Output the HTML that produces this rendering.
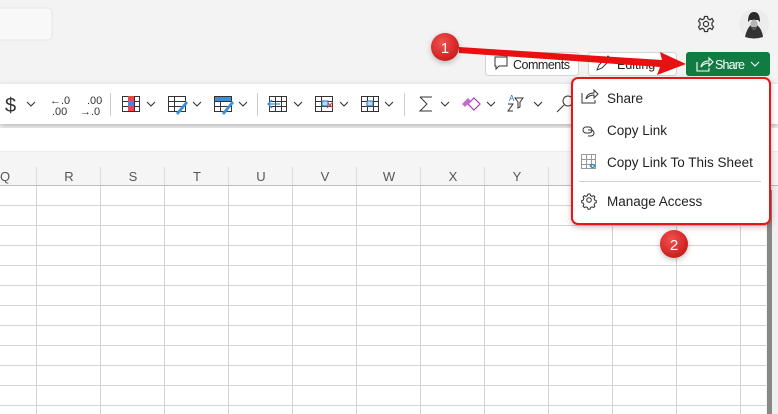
<!DOCTYPE html>
<html><head><meta charset="utf-8"><style>
html,body{margin:0;padding:0;width:778px;height:414px;overflow:hidden;background:#f3f3f3;font-family:"Liberation Sans",sans-serif}
svg{position:absolute;left:0;top:0}
</style></head><body>
<svg width="778" height="414" viewBox="0 0 778 414" xmlns="http://www.w3.org/2000/svg" font-family="Liberation Sans, sans-serif">
<defs>
<filter id="sh" x="-20%" y="-20%" width="140%" height="140%"><feDropShadow dx="0" dy="2" stdDeviation="3" flood-color="#000" flood-opacity="0.25"/></filter>
<radialGradient id="rg" cx="0.4" cy="0.35" r="0.7"><stop offset="0" stop-color="#f25050"/><stop offset="1" stop-color="#c81a1a"/></radialGradient>
</defs>
<rect width="778" height="414" fill="#f3f3f3"/>
<rect x="-10" y="8" width="62" height="32" rx="4" fill="#f8f8f8" stroke="#e6e6e6"/>
<g transform="translate(706,24)" fill="none" stroke="#333" stroke-width="1.2">
<circle r="2.6"/>
<path d="M-1.5,-7.5 L1.5,-7.5 L2,-5.2 L4,-4.2 L6,-5.5 L7.5,-3 L6,-1.3 L6,1.3 L7.5,3 L6,5.5 L4,4.2 L2,5.2 L1.5,7.5 L-1.5,7.5 L-2,5.2 L-4,4.2 L-6,5.5 L-7.5,3 L-6,1.3 L-6,-1.3 L-7.5,-3 L-6,-5.5 L-4,-4.2 L-2,-5.2 Z"/>
</g>
<circle cx="754" cy="24" r="15" fill="#ececec"/>
<path d="M745,37 Q747,28 751,25 L757,25 Q762,29 763,37 Q754,40 745,37 Z" fill="#333"/>
<path d="M748,22 Q748,12 754,12 Q760,12 760,22 L758,20 L750,20 Z" fill="#2a2a2a"/>
<ellipse cx="754" cy="24" rx="3.5" ry="4.5" fill="#b5b5b5"/>
<path d="M751,27 Q754,34 757,27 Z" fill="#555"/>
<rect x="485.5" y="52.5" width="93" height="23" rx="3" fill="#fff" stroke="#d4d4d4"/>
<path d="M495,57 h12 v9 h-8 l-3,3 v-3 h-1 z" fill="none" stroke="#333" stroke-width="1"/>
<text x="513" y="69" font-size="12.5" fill="#222" textLength="57">Comments</text>
<rect x="588.5" y="52.5" width="88" height="23" rx="3" fill="#fff" stroke="#d4d4d4"/>
<path d="M597,70 l2,-5 l9,-9 l3,3 l-9,9 z" fill="none" stroke="#333"/>
<text x="617" y="69" font-size="12.5" fill="#222">Editing</text>
<rect x="686" y="52" width="84" height="24" rx="3" fill="#107c41"/>
<path d="M697,62 v9 h12 v-3 M701,67 q1,-6 8,-6 v-3 l4,4 l-4,4 v-3 q-5,0 -8,4" fill="none" stroke="#fff" stroke-width="1.1"/>
<text x="715" y="69" font-size="12.5" fill="#fff" textLength="30">Share</text>
<path d="M751,62 l4,4 l4,-4" fill="none" stroke="#fff" stroke-width="1.1"/>
<rect x="0" y="84" width="778" height="40" fill="#fff" filter="url(#sh)"/>
<rect x="0" y="128" width="778" height="23" fill="#fff"/>
<text x="5" y="112" font-size="20" fill="#333">$</text>
<g fill="none" stroke="#333" stroke-width="1.1">
<path d="M27,102 l4,4 l4,-4 M147,102 l4,4 l4,-4 M193,102 l4,4 l4,-4 M239,102 l4,4 l4,-4 M294,102 l4,4 l4,-4 M340,102 l4,4 l4,-4 M385,102 l4,4 l4,-4 M441,102 l4,4 l4,-4 M487,102 l4,4 l4,-4 M534,102 l4,4 l4,-4"/>
</g>
<text x="50" y="104" font-size="11" fill="#333">←.0</text><text x="52" y="115" font-size="11" fill="#333">.00</text>
<text x="87" y="104" font-size="11" fill="#333">.00</text><text x="80" y="115" font-size="11" fill="#333">→.0</text>
<line x1="110.5" y1="93" x2="110.5" y2="116" stroke="#ccc"/>
<line x1="257.5" y1="93" x2="257.5" y2="116" stroke="#ccc"/>
<line x1="404.5" y1="93" x2="404.5" y2="116" stroke="#ccc"/>
<g fill="none" stroke="#333" stroke-width="1">
<rect x="122.5" y="96.5" width="17" height="15"/><path d="M122,101.5h18M122,106.5h18M128.5,96v16M134.5,96v16"/>
<rect x="168.5" y="96.5" width="17" height="15"/><path d="M168,101.5h18M168,106.5h18M174.5,96v16"/>
<rect x="214.5" y="96.5" width="17" height="15"/><path d="M214,101.5h18M214,106.5h18M220.5,96v16"/>
<rect x="269.5" y="96.5" width="17" height="15"/><path d="M269,101.5h18M269,106.5h18M275.5,96v16M281.5,96v16"/>
<rect x="315.5" y="96.5" width="17" height="15"/><path d="M315,101.5h18M315,106.5h18M321.5,96v16"/>
<rect x="361.5" y="96.5" width="17" height="15"/><path d="M361,101.5h18M361,106.5h18M367.5,96v16M373.5,96v16"/>
<path d="M420,97 h12 M420,97 l7,7 l-7,7 h12"/>
<path d="M515,98 h8 l-3,4 v5 l-2,1 v-6 z"/>
<path d="M508,104 h5 l-5,7 h5"/>
<circle cx="568" cy="101" r="5"/><path d="M564,105 l-7,7"/>
</g>
<rect x="128" y="96" width="6" height="5" fill="#e04a4a"/><rect x="128" y="106" width="6" height="5" fill="#e04a4a"/><rect x="128" y="101" width="6" height="5" fill="#3a8fd6"/>
<path d="M176,113 l10,-12 l2,2 l-10,12z" fill="#3a8fd6"/><path d="M222,113 l10,-12 l2,2 l-10,12z" fill="#3a8fd6"/>
<rect x="215" y="97" width="16" height="4" fill="#3a8fd6"/>
<path d="M268,104 h12 M272,100 l-4,4 l4,4" stroke="#3a8fd6" fill="none" stroke-width="1.3"/>
<path d="M327,102 l6,6 M333,102 l-6,6" stroke="#e04a4a" stroke-width="1.2"/>
<rect x="322" y="101" width="6" height="5" fill="#bcd9f2" stroke="#1f6fb5"/>
<rect x="367" y="101" width="6" height="5" fill="#bcd9f2" stroke="#1f6fb5"/>
<path d="M468,104 l6,-6 l6,6 l-6,6z" fill="#fff" stroke="#a63fb0" stroke-width="1.2"/><path d="M462,104 l6,-6 l3,3 l-6,6z" fill="#c56bd0"/>
<text x="509" y="101" font-size="8" fill="#1f6fb5">A</text>
<rect x="0" y="151" width="778" height="34" fill="#f5f5f5"/>
<line x1="0" y1="151.5" x2="778" y2="151.5" stroke="#ebebeb"/>
<line x1="0" y1="185.5" x2="778" y2="185.5" stroke="#bdbdbd"/>
<g fill="#555" font-size="13" text-anchor="middle">
<text x="5" y="181">Q</text><text x="69" y="181">R</text><text x="133" y="181">S</text><text x="197" y="181">T</text><text x="261" y="181">U</text><text x="325" y="181">V</text><text x="389" y="181">W</text><text x="453" y="181">X</text><text x="517" y="181">Y</text><text x="581" y="181">Z</text>
</g>
<g stroke="#dcdcdc">
<path d="M36.5,167V185M100.5,167V185M164.5,167V185M228.5,167V185M292.5,167V185M356.5,167V185M420.5,167V185M484.5,167V185M548.5,167V185M612.5,167V185M676.5,167V185M740.5,167V185"/>
</g>
<rect x="0" y="186" width="766" height="228" fill="#fff"/>
<g stroke="#d4d4d4">
<path d="M36.5,186V414M100.5,186V414M164.5,186V414M228.5,186V414M292.5,186V414M356.5,186V414M420.5,186V414M484.5,186V414M548.5,186V414M612.5,186V414M676.5,186V414M740.5,186V414"/>
<path d="M0,205.5H766M0,225.5H766M0,245.5H766M0,265.5H766M0,285.5H766M0,305.5H766M0,325.5H766M0,345.5H766M0,365.5H766M0,385.5H766M0,405.5H766"/>
</g>
<rect x="766" y="186" width="12" height="228" fill="#f0f0f0"/>
<rect x="767" y="190" width="5" height="224" fill="#888"/>
<rect x="572" y="78" width="198" height="146" rx="6" fill="#fff" stroke="#e81515" stroke-width="2" filter="url(#sh)"/>
<g fill="none" stroke="#333" stroke-width="1">
<path d="M582,93 v10 h13 v-3 M586,99 q1,-6 8,-6 v-3 l4,4 l-4,4 v-3 q-5,0 -8,4"/>
<path d="M586,127 h3 a3,3 0 0 1 0,6 h-3 a3,3 0 0 1 0,-6 z M588,130 h3 a3,3 0 0 1 0,6 h-3"/>
<rect x="581.5" y="154.5" width="14" height="14" stroke="#999"/><path d="M581,159.5h15M581,164.5h15M586.5,154v15M591.5,154v15" stroke="#999"/>
<circle cx="589" cy="200" r="2.3"/>
<path d="M588,194 h2 l.5,1.6 1.6,.8 1.5,-.8 1.3,1.4 -.8,1.5 .6,1.6 1.6,.5 v2 l-1.6,.5 -.6,1.6 .8,1.5 -1.3,1.4 -1.5,-.8 -1.6,.8 -.5,1.6 h-2 l-.5,-1.6 -1.6,-.8 -1.5,.8 -1.3,-1.4 .8,-1.5 -.6,-1.6 -1.6,-.5 v-2 l1.6,-.5 .6,-1.6 -.8,-1.5 1.3,-1.4 1.5,.8 1.6,-.8z"/>
</g>
<path d="M590,166 q2,-3 5,0 q-2,3 -5,0" fill="none" stroke="#1f8fd6" stroke-width="1.2"/>
<g font-size="13.5" fill="#222">
<text x="607" y="103">Share</text>
<text x="607" y="135">Copy Link</text>
<text x="607" y="167">Copy Link To This Sheet</text>
<text x="607" y="206">Manage Access</text>
</g>
<line x1="579" y1="181.5" x2="761" y2="181.5" stroke="#d0d0d0"/>
<path d="M459,47 L662,60 L660,52 L686,64 L657,75 L660,67 L459,53 Z" fill="#e81010"/>
<circle cx="445" cy="47" r="14" fill="url(#rg)" filter="url(#sh)"/>
<text x="445" y="53" font-size="15" fill="#fff" text-anchor="middle">1</text>
<circle cx="674" cy="244" r="14" fill="url(#rg)" filter="url(#sh)"/>
<text x="674" y="250" font-size="15" fill="#fff" text-anchor="middle">2</text>
</svg>
</body></html>
